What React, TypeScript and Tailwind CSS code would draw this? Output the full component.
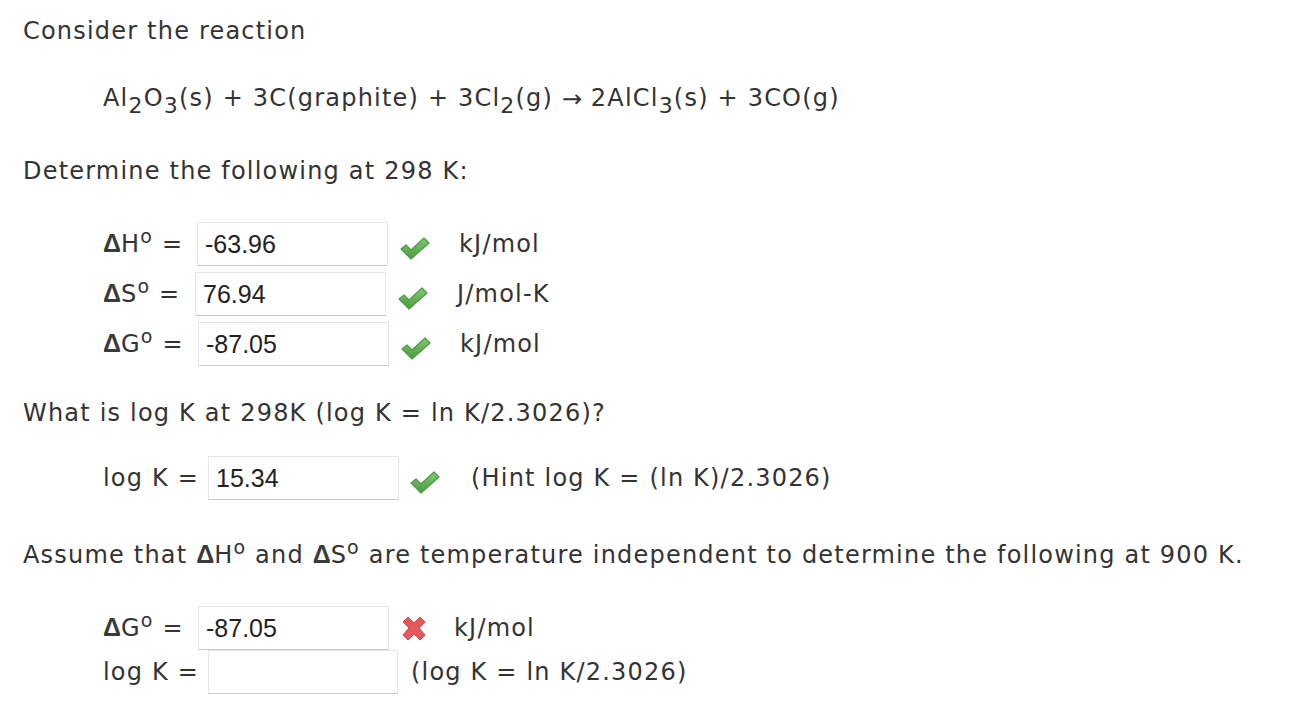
import React from 'react';

const Check = () => (
  <svg width="32" height="26" viewBox="0 0 32 26" className="shrink-0">
    <defs>
      <linearGradient id="ck" x1="0" y1="0" x2="0" y2="1">
        <stop offset="0" stopColor="#80cc72" />
        <stop offset="1" stopColor="#4a9a40" />
      </linearGradient>
    </defs>
    <path d="M2 14 L7 10 L12 15 L25 3 L30 8 L12 24 Z" fill="url(#ck)" stroke="#4f9a45" strokeWidth="1.2" strokeLinejoin="round" />
  </svg>
);

const Cross = () => (
  <svg width="28" height="28" viewBox="0 0 28 28" className="shrink-0">
    <path d="M3 7 L8 2 L14 8 L20 2 L25 7 L19 13 L25 20 L20 25 L14 19 L8 25 L3 20 L9 13 Z" fill="#e6585b" stroke="#d9484b" strokeWidth="1" strokeLinejoin="round" />
  </svg>
);

const Delta = ({ l }: { l: string }) => (
  <span className="whitespace-nowrap">
    <span className="font-['Liberation_Sans'] text-[25px] font-bold text-[#3a3a3a] tracking-normal">Δ</span>
    {l}
    <span className="relative -top-[9px] text-[19px]">o</span>
  </span>
);

const Box = ({ v, w = 'w-[191px]' }: { v?: string; w?: string }) => (
  <div className={`${w} h-[44px] shrink-0 border border-[#e6e6e6] border-b-[#c9c9c9] bg-white flex items-center px-[7px] font-['Liberation_Sans'] text-[25px] tracking-normal text-[#222]`}>
    {v}
  </div>
);

const Sub = ({ c }: { c: string }) => (
  <span className="relative top-[7px] text-[22px]">{c}</span>
);

export default function App() {
  return (
    <div className="min-h-[710px] bg-white font-['DejaVu_Sans',sans-serif] text-[24px] tracking-[1.2px] text-[#333] leading-[36px] pl-[23px] pt-[13px]">
      <div className="h-[36px]">Consider the reaction</div>

      <div className="h-[36px] mt-[31px] pl-[80px] whitespace-nowrap">
        Al<Sub c="2" />O<Sub c="3" />(s) + 3C(graphite) + 3Cl<Sub c="2" />(g){' '}
        <span className="text-[24px] tracking-normal relative top-[1px]">→</span> 2AlCl<Sub c="3" />(s) + 3CO(g)
      </div>

      <div className="h-[36px] mt-[37px]">Determine the following at 298 K:</div>

      <div className="mt-[33px] pl-[80px] flex flex-col gap-[6px]">
        <div className="flex items-center h-[44px]">
          <div className="w-[94px] whitespace-nowrap"><Delta l="H" /> =</div>
          <Box v="-63.96" />
          <div className="ml-[11px] mt-[8px]"><Check /></div>
          <div className="ml-[28px]">kJ/mol</div>
        </div>
        <div className="flex items-center h-[44px]">
          <div className="w-[92px] whitespace-nowrap"><Delta l="S" /> =</div>
          <Box v="76.94" />
          <div className="ml-[11px] mt-[8px]"><Check /></div>
          <div className="ml-[28px]">J/mol-K</div>
        </div>
        <div className="flex items-center h-[44px]">
          <div className="w-[95px] whitespace-nowrap"><Delta l="G" /> =</div>
          <Box v="-87.05" />
          <div className="ml-[11px] mt-[8px]"><Check /></div>
          <div className="ml-[28px]">kJ/mol</div>
        </div>
      </div>

      <div className="h-[36px] mt-[29px]">What is log K at 298K (log K = ln K/2.3026)?</div>

      <div className="mt-[25px] pl-[80px] flex items-center h-[44px]">
        <div className="w-[105px] whitespace-nowrap">log K =</div>
        <Box v="15.34" />
        <div className="ml-[10px] mt-[8px]"><Check /></div>
        <div className="ml-[30px]">(Hint log K = (ln K)/2.3026)</div>
      </div>

      <div className="h-[36px] mt-[36px] whitespace-nowrap">
        Assume that <Delta l="H" /> and <Delta l="S" /> are temperature independent to determine the following at 900 K.
      </div>

      <div className="mt-[34px] pl-[80px] flex flex-col">
        <div className="flex items-center h-[44px]">
          <div className="w-[95px] whitespace-nowrap"><Delta l="G" /> =</div>
          <Box v="-87.05" />
          <div className="ml-[11px] mt-[2px]"><Cross /></div>
          <div className="ml-[26px]">kJ/mol</div>
        </div>
        <div className="flex items-center h-[44px]">
          <div className="w-[105px] whitespace-nowrap">log K =</div>
          <Box w="w-[190px]" />
          <div className="ml-[13px]">(log K = ln K/2.3026)</div>
        </div>
      </div>
    </div>
  );
}
